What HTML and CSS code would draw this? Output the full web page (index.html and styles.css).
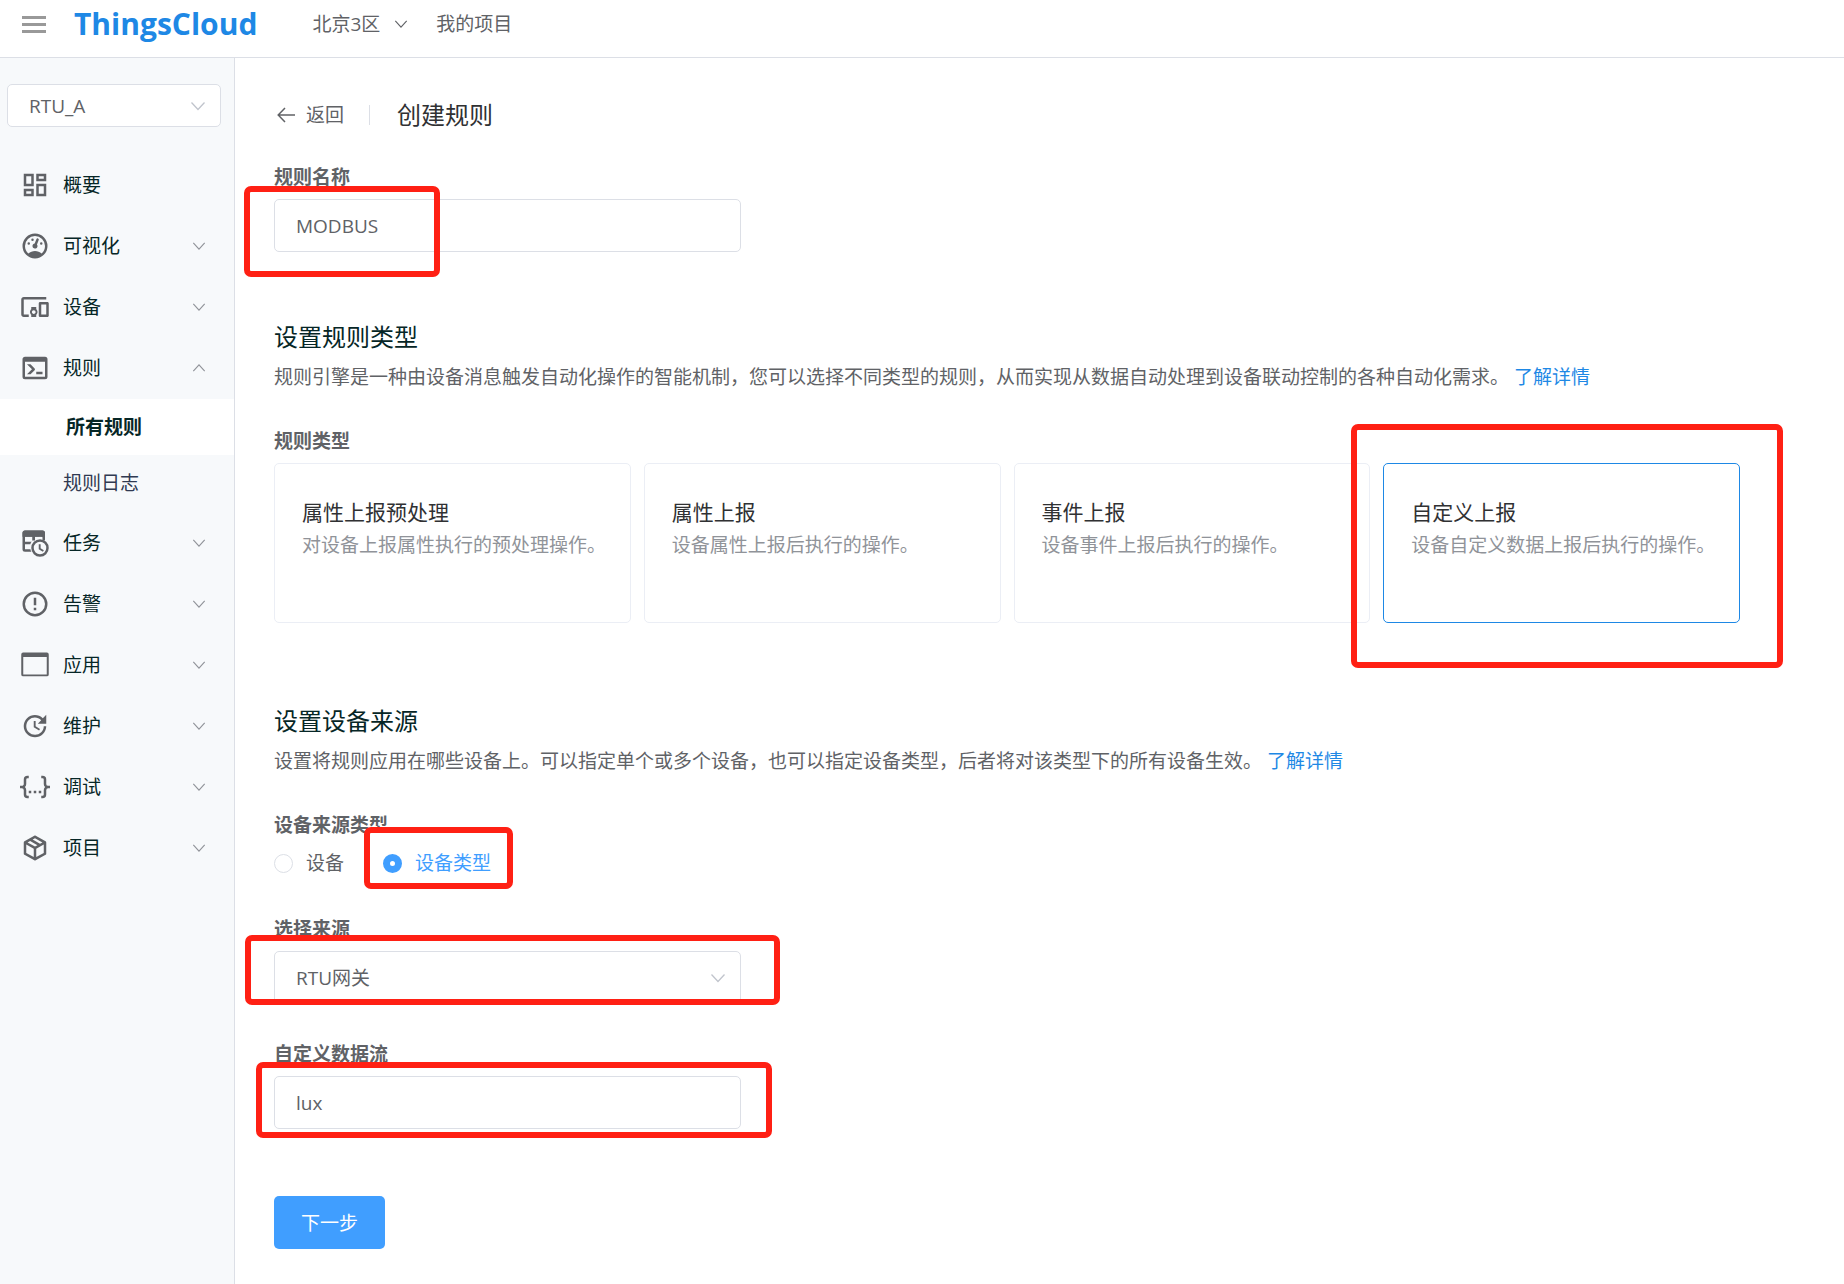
FILE: index.html
```html
<!DOCTYPE html>
<html lang="zh-CN">
<head>
<meta charset="utf-8">
<meta name="viewport" content="width=device-width, initial-scale=1">
<title>创建规则 - ThingsCloud</title>
<link rel="stylesheet" href="styles.css">
</head>
<body>
<svg class="defs" aria-hidden="true">
  <symbol id="chevron" viewBox="0 0 16 16"><path d="M1.500 4.500L8 11.500l6.500-7" fill="none" stroke="currentColor" stroke-width="1.300"/></symbol>
</svg>
<header class="topbar">
  <button class="menu-toggle" type="button" aria-label="菜单"><span></span><span></span><span></span></button>
  <a class="logo" href="#">ThingsCloud</a>
  <button class="region" type="button">北京3区<svg class="chevron"><use href="#chevron"/></svg></button>
  <a class="project" href="#">我的项目</a>
</header>
<div class="layout">
  <aside class="sidebar">
    <div class="select-box select-box-small">
      <select class="control" aria-label="项目"><option>RTU_A</option></select>
      <svg class="chevron"><use href="#chevron"/></svg>
    </div>
    <nav class="menu">
      <a class="menu-item" href="#">
        <svg class="icon" viewBox="0 0 24 24"><path d="M19 5v2h-4V5h4M9 5v6H5V5h4m10 8v6h-4v-6h4M9 17v2H5v-2h4M21 3h-8v6h8V3zM11 3H3v10h8V3zm10 8h-8v10h8V11zm-10 4H3v6h8v-6z"/></svg>
        <span>概要</span>
      </a>
      <a class="menu-item" href="#">
        <svg class="icon" viewBox="0 0 24 24"><path d="M12,2A10,10 0 0,0 2,12A10,10 0 0,0 12,22A10,10 0 0,0 22,12A10,10 0 0,0 12,2M12,4A8,8 0 0,1 20,12C20,14.4 19,16.5 17.3,18C15.9,16.7 14,16 12,16C10,16 8.2,16.7 6.7,18C5,16.5 4,14.4 4,12A8,8 0 0,1 12,4M14,5.89C13.62,5.9 13.26,6.15 13.1,6.54L11.81,9.77L11.71,10C11,10.13 10.41,10.6 10.14,11.26C9.73,12.29 10.23,13.45 11.26,13.86C12.29,14.27 13.45,13.77 13.86,12.74C14.12,12.08 14,11.32 13.57,10.76L13.67,10.5L14.96,7.29L14.97,7.26C15.17,6.75 14.92,6.17 14.41,5.96C14.28,5.91 14.15,5.89 14,5.89M10,6A1,1 0 0,0 9,7A1,1 0 0,0 10,8A1,1 0 0,0 11,7A1,1 0 0,0 10,6M7,9A1,1 0 0,0 6,10A1,1 0 0,0 7,11A1,1 0 0,0 8,10A1,1 0 0,0 7,9M17,9A1,1 0 0,0 16,10A1,1 0 0,0 17,11A1,1 0 0,0 18,10A1,1 0 0,0 17,9Z"/></svg>
        <span>可视化</span><svg class="chevron"><use href="#chevron"/></svg>
      </a>
      <a class="menu-item" href="#">
        <svg class="icon" viewBox="0 0 24 24"><path d="M3 6h18V4H3c-1.100 0-2 .9-2 2v12c0 1.100.9 2 2 2h4v-2H3V6zm10 6H9v1.780c-.61.55-1 1.330-1 2.220s.39 1.670 1 2.220V20h4v-1.780c.61-.55 1-1.340 1-2.220s-.39-1.670-1-2.220V12zm-2 5.500c-.83 0-1.500-.67-1.500-1.500s.67-1.500 1.500-1.500 1.500.67 1.500 1.500-.67 1.500-1.500 1.500zM22 8h-6c-.5 0-1 .5-1 1v10c0 .5.5 1 1 1h6c.5 0 1-.5 1-1V9c0-.5-.5-1-1-1zm-1 10h-4v-8h4v8z"/></svg>
        <span>设备</span><svg class="chevron"><use href="#chevron"/></svg>
      </a>
      <a class="menu-item" href="#" aria-expanded="true">
        <svg class="icon" viewBox="0 0 24 24"><path d="M20,19V7H4V19H20M20,3A2,2 0 0,1 22,5V19A2,2 0 0,1 20,21H4A2,2 0 0,1 2,19V5C2,3.89 2.9,3 4,3H20M13,17V15H18V17H13M9.58,13L5.57,9H8.4L11.7,12.3C12.09,12.69 12.09,13.33 11.7,13.72L8.42,17H5.59L9.58,13Z"/></svg>
        <span>规则</span><svg class="chevron chevron-up"><use href="#chevron"/></svg>
      </a>
      <div class="submenu">
        <a class="submenu-item submenu-item-active" href="#" aria-current="page">所有规则</a>
        <a class="submenu-item" href="#">规则日志</a>
      </div>
      <a class="menu-item" href="#">
        <svg class="icon" viewBox="0 0 24 24"><path d="M4 2h14a2 2 0 0 1 2 2v13H11v2H4a2 2 0 0 1-2-2V4a2 2 0 0 1 2-2zM4 7v4h6V7H4zm8 0v4h6V7h-6zM4 13v4h6v-4H4z"/><circle cx="16" cy="15" r="8" class="icon-cut"/><path d="M4 2h14a2 2 0 0 1 2 2v3H2V4a2 2 0 0 1 2-2z"/><path d="M18 6h2v4h-2zM10 6h2v4h-2z"/><circle cx="16" cy="16" r="6" class="icon-cut"/><path d="M16 9a7 7 0 1 0 0 14 7 7 0 0 0 0-14zm0 2a5 5 0 1 1 0 10 5 5 0 0 1 0-10zm-1 2v4l3.300 2 .8-1.300-2.600-1.500V13H15z"/></svg>
        <span>任务</span><svg class="chevron"><use href="#chevron"/></svg>
      </a>
      <a class="menu-item" href="#">
        <svg class="icon" viewBox="0 0 24 24"><path d="M11,15H13V17H11V15M11,7H13V13H11V7M12,2C6.47,2 2,6.500 2,12A10,10 0 0,0 12,22A10,10 0 0,0 22,12A10,10 0 0,0 12,2M12,20A8,8 0 0,1 4,12A8,8 0 0,1 12,4A8,8 0 0,1 20,12A8,8 0 0,1 12,20Z"/></svg>
        <span>告警</span><svg class="chevron"><use href="#chevron"/></svg>
      </a>
      <a class="menu-item" href="#">
        <svg class="icon" viewBox="0 0 24 24"><path d="M2.500 2h19A1.500 1.500 0 0 1 23 3.500v16a1.500 1.500 0 0 1-1.500 1.500h-19A1.500 1.500 0 0 1 1 19.500v-16A1.500 1.500 0 0 1 2.500 2zM2.600 5.500v14h18.800v-14H2.600z"/></svg>
        <span>应用</span><svg class="chevron"><use href="#chevron"/></svg>
      </a>
      <a class="menu-item" href="#">
        <svg class="icon" viewBox="0 0 24 24"><path d="M21,10.120H14.220L16.960,7.300C14.230,4.600 9.810,4.500 7.080,7.200C4.350,9.910 4.350,14.280 7.080,17C9.810,19.700 14.230,19.700 16.960,17C18.320,15.650 19,14.080 19,12.100H21C21,14.080 20.120,16.650 18.360,18.390C14.850,21.870 9.150,21.870 5.640,18.390C2.140,14.920 2.110,9.280 5.620,5.810C9.130,2.340 14.760,2.340 18.270,5.810L21,3V10.120M12.500,8V12.250L16,14.330L15.280,15.540L11,13V8H12.500Z"/></svg>
        <span>维护</span><svg class="chevron"><use href="#chevron"/></svg>
      </a>
      <a class="menu-item" href="#">
        <svg class="icon" viewBox="0 0 24 24"><path d="M7 4H6a2 2 0 0 0-2 2v3.500A2.500 2.500 0 0 1 1.500 12H0h1.500A2.500 2.500 0 0 1 4 14.500V18a2 2 0 0 0 2 2h1M17 4h1a2 2 0 0 1 2 2v3.500a2.500 2.500 0 0 0 2.500 2.500H24h-1.500a2.500 2.500 0 0 0-2.500 2.500V18a2 2 0 0 1-2 2h-1" fill="none" stroke="currentColor" stroke-width="2"/><path d="M7 15h2v2H7zM11 15h2v2h-2zM15 15h2v2h-2z"/></svg>
        <span>调试</span><svg class="chevron"><use href="#chevron"/></svg>
      </a>
      <a class="menu-item" href="#">
        <svg class="icon" viewBox="0 0 24 24"><path d="M21,16.5C21,16.88 20.79,17.21 20.47,17.38L12.57,21.82C12.41,21.94 12.21,22 12,22C11.79,22 11.59,21.94 11.43,21.82L3.53,17.38C3.21,17.21 3,16.88 3,16.5V7.5C3,7.12 3.21,6.79 3.53,6.62L11.43,2.18C11.59,2.06 11.79,2 12,2C12.21,2 12.41,2.06 12.57,2.18L20.47,6.62C20.79,6.79 21,7.12 21,7.5V16.5M12,4.15L10.11,5.22L16,8.61L17.96,7.5L12,4.15M6.04,7.5L12,10.85L13.96,9.75L8.08,6.35L6.04,7.5M5,15.91L11,19.29V12.58L5,9.21V15.91M19,15.91V9.21L13,12.58V19.29L19,15.91Z"/></svg>
        <span>项目</span><svg class="chevron"><use href="#chevron"/></svg>
      </a>
    </nav>
  </aside>
  <main class="content">
    <div class="page-header">
      <a class="back" href="#"><svg class="back-icon" viewBox="0 0 18 18"><path d="M18 9H1.500M8 2L1.200 9 8 16" fill="none" stroke="currentColor" stroke-width="1.500"/></svg>返回</a>
      <h1 class="page-title">创建规则</h1>
    </div>
    <form>
      <div class="field">
        <label class="label" for="rule-name">规则名称</label>
        <input class="control" id="rule-name" type="text" value="MODBUS">
        <span class="mark mark-name"></span>
      </div>

      <section class="section section-type">
        <h2 class="section-title">设置规则类型</h2>
        <p class="section-text">规则引擎是一种由设备消息触发自动化操作的智能机制，您可以选择不同类型的规则，从而实现从数据自动处理到设备联动控制的各种自动化需求。 <a class="link" href="#">了解详情</a></p>
        <div class="label" id="type-label">规则类型</div>
        <div class="cards" role="group" aria-labelledby="type-label">
          <button class="card" type="button"><span class="card-title">属性上报预处理</span><span class="card-text">对设备上报属性执行的预处理操作。</span></button>
          <button class="card" type="button"><span class="card-title">属性上报</span><span class="card-text">设备属性上报后执行的操作。</span></button>
          <button class="card" type="button"><span class="card-title">事件上报</span><span class="card-text">设备事件上报后执行的操作。</span></button>
          <button class="card card-selected" type="button" aria-pressed="true"><span class="card-title">自定义上报</span><span class="card-text">设备自定义数据上报后执行的操作。</span><span class="mark mark-card"></span></button>
        </div>
      </section>

      <section class="section section-source">
        <h2 class="section-title">设置设备来源</h2>
        <p class="section-text">设置将规则应用在哪些设备上。可以指定单个或多个设备，也可以指定设备类型，后者将对该类型下的所有设备生效。 <a class="link" href="#">了解详情</a></p>
        <div class="field">
          <div class="label" id="source-label">设备来源类型</div>
          <div class="radios" role="radiogroup" aria-labelledby="source-label">
            <label class="radio"><input type="radio" name="source">设备</label>
            <label class="radio radio-checked"><input type="radio" name="source" checked>设备类型<span class="mark mark-radio"></span></label>
          </div>
        </div>
        <div class="field">
          <label class="label" for="source">选择来源</label>
          <div class="select-box">
            <select class="control" id="source"><option>RTU网关</option></select>
            <svg class="chevron"><use href="#chevron"/></svg>
          </div>
          <span class="mark mark-source"></span>
        </div>
        <div class="field">
          <label class="label" for="stream">自定义数据流</label>
          <input class="control" id="stream" type="text" value="lux">
          <span class="mark mark-stream"></span>
        </div>
      </section>
      <button class="submit" type="submit">下一步</button>
    </form>
  </main>
</div>
</body>
</html>
```
FILE: styles.css
```css
* { box-sizing: border-box; }
body {
  margin: 0;
  min-height: 100vh;
  display: flex;
  flex-direction: column;
  background: #fff;
  color: #606266;
  font: 19px/28px "Open Sans", "Noto Sans CJK SC", sans-serif;
}
a { color: inherit; text-decoration: none; }
button, input, select { font: inherit; color: inherit; }
.defs { position: absolute; width: 0; height: 0; }

.topbar {
  display: flex;
  align-items: center;
  height: 58px;
  padding: 0 22px 9px;
  border-bottom: 1px solid #dcdfe6;
}
.menu-toggle {
  display: flex;
  flex-direction: column;
  gap: 4px;
  width: 24px;
  padding: 0;
  border: 0;
  background: none;
}
.menu-toggle span { height: 3px; background: #999; }
.logo { margin-left: 28px; color: #1e88e5; font-size: 30px; font-weight: 700; }
.region {
  display: flex;
  align-items: center;
  gap: 14px;
  margin-left: 55px;
  padding: 0;
  border: 0;
  background: none;
}
.project { margin-left: 28px; }
.chevron { width: 14px; height: 14px; flex: none; }

.layout { flex: 1; display: flex; }
.sidebar {
  width: 235px;
  flex: none;
  padding-top: 26px;
  background: #f7f9fb;
  border-right: 1px solid #dcdfe6;
}
.menu { margin-top: 27px; }
.menu-item {
  display: flex;
  align-items: center;
  gap: 13px;
  height: 61px;
  padding: 0 28px 0 20px;
  color: #062626;
}
.menu-item .chevron { margin-left: auto; color: #909399; }
.menu-item .chevron-up { transform: rotate(180deg); }
.icon { width: 30px; height: 30px; flex: none; fill: currentColor; color: #606266; overflow: visible; }
.icon-cut { fill: #f7f9fb; }
.submenu { padding: 1px 0; }
.submenu-item { display: block; padding-left: 63px; line-height: 56px; color: #303a52; }
.submenu-item-active {
  border-left: 3px solid #fff;
  background: #fff;
  color: #062626;
  font-weight: 700;
}

.content { flex: 1; min-width: 0; padding: 37px 104px 35px 39px; }
.page-header { display: flex; align-items: center; height: 40px; margin-bottom: 20px; }
.back { display: flex; align-items: center; gap: 11px; padding-left: 3px; }
.back-icon { width: 18px; height: 18px; }
.page-title {
  margin: 0 0 0 25px;
  padding-left: 27px;
  border-left: 1px solid #dcdfe6;
  color: #303133;
  font-size: 24px;
  font-weight: 400;
  line-height: 20px;
}

.field { position: relative; max-width: 467px; margin-bottom: 28px; }
.label { display: block; line-height: 44px; font-weight: 700; }
.control {
  display: block;
  width: 100%;
  height: 53px;
  padding: 0 21px;
  border: 1px solid #dcdfe6;
  border-radius: 5px;
  background: #fff;
  appearance: none;
}
.select-box { display: grid; align-items: center; }
.select-box > * { grid-area: 1 / 1; }
.select-box .chevron { width: 16px; height: 16px; margin-right: 15px; justify-self: end; color: #c0c4cc; pointer-events: none; }
.select-box-small { margin: 0 13px 0 7px; }
.select-box-small .control { height: 43px; }

.section-type { margin-top: 65px; }
.section-source { margin-top: 78px; }
.section-title { margin: 0; color: #062626; font-size: 24px; font-weight: 400; line-height: 40px; }
.section-text { margin: 0 0 22px; line-height: 40px; }
.link { color: #1e88e5; }

.cards { display: grid; grid-template-columns: repeat(4, minmax(0, 1fr)); gap: 13px; }
.card {
  position: relative;
  display: flex;
  flex-direction: column;
  height: 160px;
  padding: 31px 27px;
  border: 1px solid #ebeef5;
  border-radius: 5px;
  background: #fff;
  text-align: left;
}
.card-selected { border-color: #1e88e5; }
.card-title { color: #303133; font-size: 21px; line-height: 34px; }
.card-text { color: #909399; line-height: 32px; white-space: nowrap; }

.radios { display: flex; gap: 39px; }
.radio { position: relative; display: flex; align-items: center; gap: 13px; height: 32px; }
.radio input {
  appearance: none;
  width: 19px;
  height: 19px;
  margin: 0;
  border: 1px solid #dcdfe6;
  border-radius: 50%;
  background: #fff;
}
.radio input:checked { border: 7px solid #409eff; }
.radio-checked { color: #409eff; }

.submit {
  display: block;
  height: 53px;
  margin-top: 67px;
  padding: 0 27px;
  border: 0;
  border-radius: 5px;
  background: #409eff;
  color: #fff;
}

/* Highlight frames laid over the fields to fill in */
.mark { position: absolute; border: 6px solid #ff2014; border-radius: 7px; pointer-events: none; }
.mark-name { inset: 31px auto -25px -30px; width: 196px; }
.mark-card { inset: -40px -44px -46px -33px; }
.mark-radio { inset: -20px -22px -10px -19px; }
.mark-source { inset: 28px -39px -1px -29px; }
.mark-stream { inset: 30px -31px -9px -18px; }
```
